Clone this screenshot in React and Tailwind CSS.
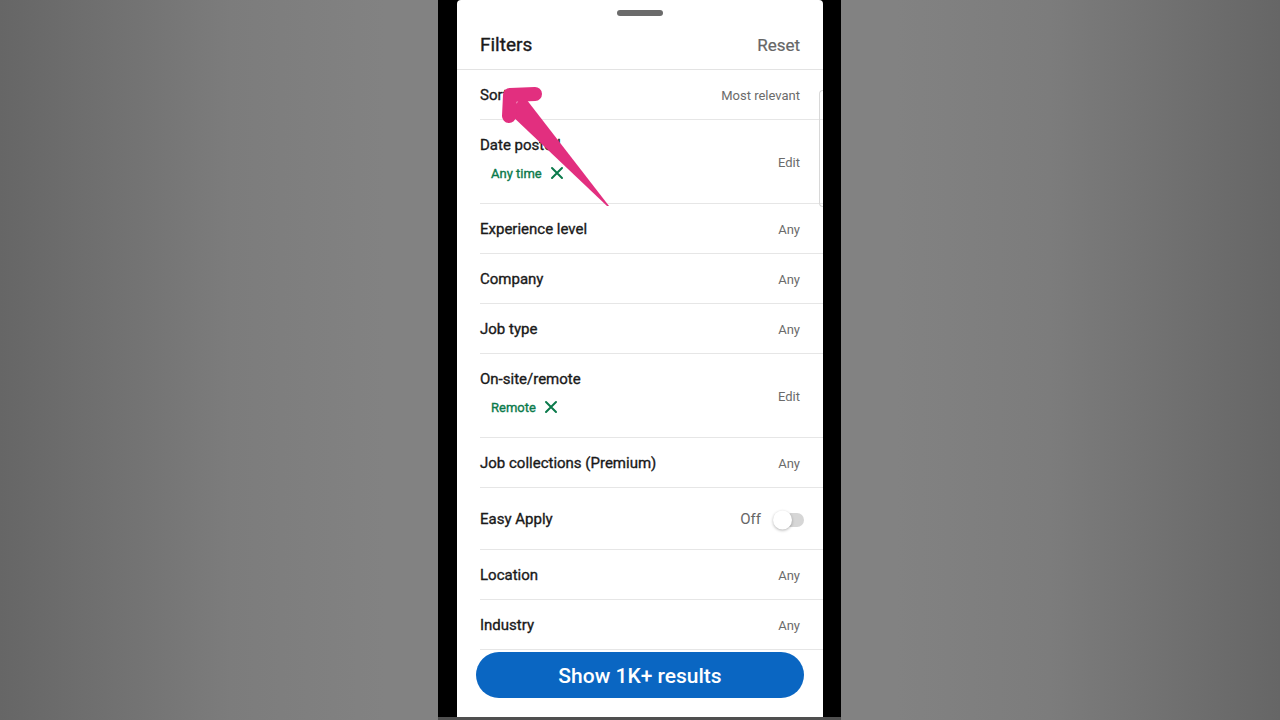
import React, { useState } from 'react';

const rows = [
  { id: 'sort', label: 'Sort', value: 'Most relevant' },
  { id: 'date', label: 'Date posted', value: 'Edit', chip: 'Any time' },
  { id: 'exp', label: 'Experience level', value: 'Any' },
  { id: 'company', label: 'Company', value: 'Any' },
  { id: 'type', label: 'Job type', value: 'Any' },
  { id: 'remote', label: 'On-site/remote', value: 'Edit', chip: 'Remote' },
  { id: 'collections', label: 'Job collections (Premium)', value: 'Any' },
  { id: 'easy', label: 'Easy Apply', toggle: true },
  { id: 'location', label: 'Location', value: 'Any' },
  { id: 'industry', label: 'Industry', value: 'Any' },
];

const CloseIcon = () => (
  <svg width="14" height="14" viewBox="0 0 14 14" className="text-[#0b7a4b]">
    <path d="M2 2 L12 12 M12 2 L2 12" stroke="currentColor" strokeWidth="2" strokeLinecap="round" />
  </svg>
);

const Chip = ({ text }) => (
  <div className="flex items-center gap-[8px] pl-[11px] mt-[7px]">
    <span className="text-[13px] text-[#0b7a4b] [-webkit-text-stroke:0.35px_#0b7a4b]">{text}</span>
    <CloseIcon />
  </div>
);

const Toggle = ({ on }) => (
  <div className="relative w-[30px] h-[14px] rounded-full bg-[#d6d6d6]">
    <div
      className={`absolute top-1/2 -translate-y-1/2 w-[19px] h-[19px] rounded-full bg-white shadow-[0_1px_3px_rgba(0,0,0,0.3)] ${
        on ? 'left-[12px]' : 'left-[-1px]'
      }`}
    />
  </div>
);

const FilterRow = ({ row, easyApply }) => {
  const tall = !!row.chip;
  return (
    <div className="pl-[23px]">
      <div
        className={`flex items-center justify-between pr-[23px] pt-[2px] border-b border-[#e6e6e6] ${
          tall ? 'h-[84px]' : row.toggle ? 'h-[62px]' : 'h-[50px]'
        }`}
      >
        <div className={tall ? 'pb-[8px]' : ''}>
          <p className="text-[15px] text-[#1a1a1a] [-webkit-text-stroke:0.35px_#1a1a1a]">{row.label}</p>
          {row.chip && <Chip text={row.chip} />}
        </div>
        {row.toggle ? (
          <div className="flex items-center gap-[13px] -mr-[4px]">
            <span className="text-[15px] text-[#666]">Off</span>
            <Toggle on={easyApply} />
          </div>
        ) : (
          <span className="text-[13px] text-[#6b6b6b]">{row.value}</span>
        )}
      </div>
    </div>
  );
};

// pink pointer drawn on top of the sheet
const Pointer = () => (
  <svg
    className="absolute left-[23px] top-[80px] pointer-events-none"
    width="140"
    height="140"
    viewBox="0 0 140 140"
  >
    <polygon points="43,15 129,126 127,126 29,33" fill="#e22f7f" />
    <path
      d="M55 14 L30 15 L29 36"
      fill="none"
      stroke="#e22f7f"
      strokeWidth="14"
      strokeLinecap="round"
      strokeLinejoin="round"
    />
  </svg>
);

export default function App() {
  const [easyApply] = useState(false);

  return (
    <div
      className="w-[1280px] h-[720px] flex overflow-hidden bg-[linear-gradient(to_right,#666666_0%,#7c7c7c_18%,#828282_30%,#828282_70%,#7c7c7c_82%,#666666_100%)]"
      style={{ fontFamily: 'Roboto, "Noto Sans", sans-serif' }}
    >
      <div className="w-[438px]" />
      <div className="w-[403px] flex flex-col">
        <div className="flex-1 flex bg-black">
          <div className="w-[19px]" />
          <div className="relative w-[366px] bg-white flex flex-col rounded-t-[4px]">
            <div className="flex justify-center pt-[10px]">
              <div className="w-[46px] h-[6px] rounded-full bg-[#6b6b6b]" />
            </div>
            <div className="flex items-center justify-between px-[23px] h-[54px] border-b border-[#e3e3e3] pt-[6px]">
              <h1 className="text-[19px] text-[#1a1a1a] [-webkit-text-stroke:0.35px_#1a1a1a]">Filters</h1>
              <button className="text-[17px] text-[#666] [-webkit-text-stroke:0.2px_#666]">Reset</button>
            </div>
            <div className="flex-1 flex flex-col">
              {rows.map((row) => (
                <FilterRow key={row.id} row={row} easyApply={easyApply} />
              ))}
            </div>
            <div className="absolute left-[19px] right-[19px] top-[652px]">
              <button className="w-full h-[46px] pt-[3px] rounded-full bg-[#0a66c2] text-white text-[21px] font-medium">
                Show 1K+ results
              </button>
            </div>
            <div className="absolute right-0 top-[90px] w-[4px] h-[117px] border border-r-0 border-[#d8d8d8] rounded-l-[4px]" />
            <Pointer />
          </div>
          <div className="w-[18px]" />
        </div>
        <div className="h-[3px] bg-[#4f4f4f]" />
      </div>
      <div className="flex-1" />
    </div>
  );
}
